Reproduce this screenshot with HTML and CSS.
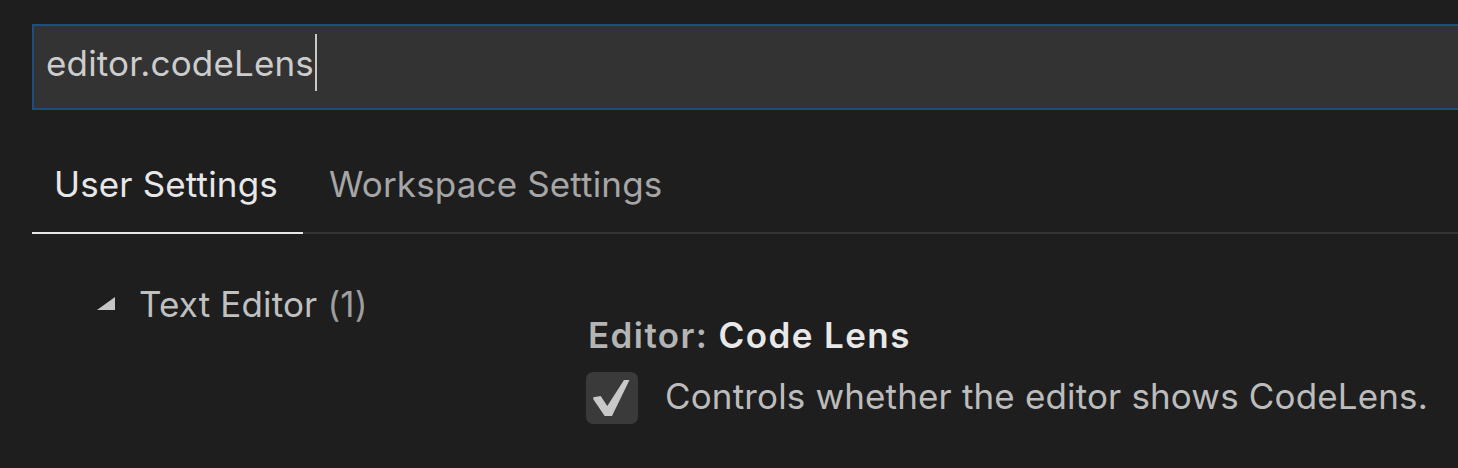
FILE: index.html
```html
<!DOCTYPE html>
<html lang="en">
<head>
<meta charset="utf-8">
<title>Settings</title>
<link rel="stylesheet" href="styles.css">
</head>
<body>
<div class="settings-editor">
  <div class="search">
    <span class="search-text">editor.codeLens</span><span class="caret"></span>
  </div>
  <div class="tabs">
    <div class="tab tab-active">User Settings</div>
    <div class="tab">Workspace Settings</div>
  </div>
  <div class="body">
    <div class="toc">
      <div class="toc-item">
        <svg class="twistie" width="18" height="13" viewBox="0 0 18 13"><polygon points="0,13 18,13 18,0" fill="#c5c5c5"/></svg>
        <span class="toc-label">Text Editor</span>&nbsp;<span class="toc-count">(1)</span>
      </div>
    </div>
    <div class="list">
      <div class="setting">
        <div class="setting-title"><span class="cat">Editor: </span><span class="name">Code Lens</span></div>
        <div class="setting-value">
          <div class="checkbox">
            <svg width="52" height="52" viewBox="0 0 52 52"><polygon points="7.3,25.3 14.7,24 21.3,34 38,8 43.5,8 26,44 18.7,44 7.3,27.3" fill="#c8c8c8"/></svg>
          </div>
          <div class="desc">Controls whether the editor shows CodeLens.</div>
        </div>
      </div>
    </div>
  </div>
</div>
</body>
</html>
```
FILE: styles.css
```css
html, body {
  margin: 0;
  padding: 0;
  background: #1e1e1e;
  height: 100%;
  overflow: hidden;
}
.settings-editor {
  font-family: "Inter", "Roboto", sans-serif;
  font-size: 35px;
  letter-spacing: 0.15px;
  padding: 24px 0 0 32px;
}
.search {
  box-sizing: border-box;
  height: 86px;
  border: 2px solid #1c4f7e;
  border-right: none;
  background: #333333;
  color: #cccccc;
  padding: 0 0 8px 12px;
  line-height: 74px;
  white-space: nowrap;
}
.caret {
  display: inline-block;
  width: 2px;
  height: 57px;
  margin-left: 1px;
  background: #c8c8c8;
  vertical-align: -15px;
}
.tabs {
  display: flex;
  gap: 4px;
  margin-top: 27px;
  border-bottom: 2px solid #333333;
}
.tab {
  line-height: 95px;
  padding: 0 25px 0 22px;
  color: #a6a6a6;
  margin-bottom: -2px;
  border-bottom: 2px solid transparent;
  white-space: nowrap;
}
.tab-active {
  color: #e7e7e7;
  border-bottom-color: #e7e7e7;
}
.body {
  display: flex;
}
.toc {
  width: 554px;
  flex: none;
  padding-top: 49px;
}
.toc-item {
  display: flex;
  align-items: center;
  line-height: 42px;
  padding-left: 65px;
  color: #c0c0c0;
  white-space: pre;
}
.twistie {
  margin-right: 24px;
  margin-top: -2px;
  flex: none;
}
.toc-count {
  color: #9e9e9e;
}
.list {
  flex: 1;
  padding-top: 80px;
}
.setting-title {
  line-height: 42px;
  font-weight: 600;
  letter-spacing: 1.4px;
  padding-left: 2px;
  white-space: nowrap;
}
.cat {
  color: #b4b4b4;
}
.name {
  color: #e8e8e8;
}
.setting-value {
  display: flex;
  align-items: flex-start;
  margin-top: 16px;
}
.checkbox {
  width: 52px;
  height: 52px;
  border-radius: 7px;
  background: #3a3a3a;
  flex: none;
}
.checkbox svg {
  display: block;
}
.desc {
  margin-left: 27px;
  padding-top: 3px;
  line-height: 42px;
  color: #bcbcbc;
  white-space: nowrap;
}
```
